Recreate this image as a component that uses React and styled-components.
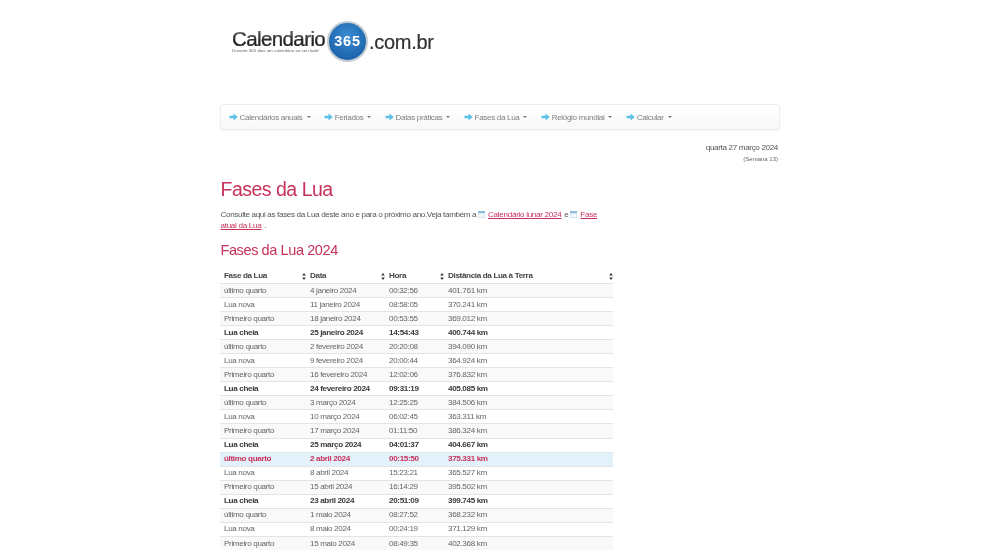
import React from "react";
import styled, { createGlobalStyle } from "styled-components";

const NAV_ITEMS = [
  "Calendários anuais",
  "Feriados",
  "Datas práticas",
  "Fases da Lua",
  "Relógio mundial",
  "Calcular",
];

const ROWS = [
  ["último quarto", "4 janeiro 2024", "00:32:56", "401.761 km"],
  ["Lua nova", "11 janeiro 2024", "08:58:05", "370.241 km"],
  ["Primeiro quarto", "18 janeiro 2024", "00:53:55", "369.012 km"],
  ["Lua cheia", "25 janeiro 2024", "14:54:43", "400.744 km"],
  ["último quarto", "2 fevereiro 2024", "20:20:08", "394.090 km"],
  ["Lua nova", "9 fevereiro 2024", "20:00:44", "364.924 km"],
  ["Primeiro quarto", "16 fevereiro 2024", "12:02:06", "376.832 km"],
  ["Lua cheia", "24 fevereiro 2024", "09:31:19", "405.085 km"],
  ["último quarto", "3 março 2024", "12:25:25", "384.506 km"],
  ["Lua nova", "10 março 2024", "06:02:45", "363.311 km"],
  ["Primeiro quarto", "17 março 2024", "01:11:50", "386.324 km"],
  ["Lua cheia", "25 março 2024", "04:01:37", "404.667 km"],
  ["último quarto", "2 abril 2024", "00:15:50", "375.331 km"],
  ["Lua nova", "8 abril 2024", "15:23:21", "365.527 km"],
  ["Primeiro quarto", "15 abril 2024", "16:14:29", "395.502 km"],
  ["Lua cheia", "23 abril 2024", "20:51:09", "399.745 km"],
  ["último quarto", "1 maio 2024", "08:27:52", "368.232 km"],
  ["Lua nova", "8 maio 2024", "00:24:19", "371.129 km"],
  ["Primeiro quarto", "15 maio 2024", "08:49:35", "402.368 km"],
];

const HEADERS = ["Fase da Lua", "Data", "Hora", "Distância da Lua à Terra"];

const Arrow = () => (
  <svg width="9" height="8" viewBox="0 0 9 8">
    <path d="M0.5 2.8h4V0.4L8.8 4 4.5 7.6V5.2H0.5z" fill="#5cc0e8" />
  </svg>
);

const CalendarIcon = () => (
  <CalendarSvg width="7" height="7" viewBox="0 0 7 7">
    <rect x="0" y="0" width="7" height="7" rx="0.5" fill="#d5e6f2" />
    <rect x="0" y="0" width="7" height="2" fill="#8dbcdd" />
    <rect x="1" y="3" width="5" height="3" fill="#f4f8fb" />
  </CalendarSvg>
);

const SortIcon = () => (
  <SortSvg width="4" height="7" viewBox="0 0 4 7">
    <path d="M2 0l1.8 2.6H0.2zM2 7L0.2 4.4h3.6z" fill="#333" />
  </SortSvg>
);

export default function App() {
  return (
    <Page>
      <GlobalStyle />
      <Logo>
        <LogoName>
          <LogoWord>Calendario</LogoWord>
          <LogoSlogan>Durante 365 dias um calendário ao seu lado!</LogoSlogan>
        </LogoName>
        <LogoBadge>365</LogoBadge>
        <LogoDomain>.com.br</LogoDomain>
      </Logo>

      <Nav>
        {NAV_ITEMS.map((item) => (
          <NavItem key={item}>
            <Arrow />
            {item}
            <Caret />
          </NavItem>
        ))}
      </Nav>

      <DateBox>
        <Today>quarta 27 março 2024</Today>
        <Week>(Semana 13)</Week>
      </DateBox>

      <Title>Fases da Lua</Title>
      <Intro>
        Consulte aqui as fases da Lua deste ano e para o próximo ano.Veja também a{" "}
        <CalendarIcon /> <TextLink>Calendário lunar 2024</TextLink> e <CalendarIcon />{" "}
        <TextLink>Fase atual da Lua</TextLink> .
      </Intro>
      <Subtitle>Fases da Lua 2024</Subtitle>

      <MoonTable>
        <colgroup>
          <col style={{ width: 86 }} />
          <col style={{ width: 79 }} />
          <col style={{ width: 59 }} />
          <col />
        </colgroup>
        <thead>
          <tr>
            {HEADERS.map((h) => (
              <HeadCell key={h}>
                {h}
                <SortIcon />
              </HeadCell>
            ))}
          </tr>
        </thead>
        <tbody>
          {ROWS.map((row, i) => (
            <Row
              key={row[1]}
              $odd={i % 2 === 0}
              $full={row[0] === "Lua cheia"}
              $current={row[1] === "2 abril 2024"}
            >
              {row.map((cell) => (
                <Cell key={cell}>{cell}</Cell>
              ))}
            </Row>
          ))}
        </tbody>
      </MoonTable>
    </Page>
  );
}

const GlobalStyle = createGlobalStyle`
  html, body {
    margin: 0;
    height: 554px;
    overflow: hidden;
    background: #fff;
  }
  body {
    font-family: "Liberation Sans", Arial, sans-serif;
    font-size: 8.1px;
    letter-spacing: -0.35px;
    color: #555;
  }
`;

const Page = styled.div`
  width: 560px;
  margin-left: 220px;
  padding-top: 20px;
  filter: blur(0.35px);
`;

const Logo = styled.div`
  display: flex;
  align-items: center;
  height: 42px;
  padding-left: 12px;
  margin-bottom: 42px;
`;

const LogoName = styled.div`
  display: flex;
  flex-direction: column;
  flex: none;
  width: 95px;
`;

const LogoWord = styled.span`
  font-size: 20.5px;
  line-height: 18px;
  letter-spacing: -0.6px;
  background: linear-gradient(#666, #222 60%);
  -webkit-background-clip: text;
  background-clip: text;
  color: transparent;
  -webkit-text-stroke: 0.2px #333;
`;

const LogoSlogan = styled.span`
  font-size: 4.4px;
  line-height: 5px;
  letter-spacing: 0;
  color: #666;
  white-space: nowrap;
`;

const LogoBadge = styled.div`
  flex: none;
  display: flex;
  align-items: center;
  justify-content: center;
  box-sizing: border-box;
  width: 41px;
  height: 41px;
  border: 2px solid #c4ccd2;
  border-radius: 50%;
  background: radial-gradient(circle at 50% 35%, #3b8bd0, #1258a0);
  color: #fff;
  font-size: 14.5px;
  font-weight: bold;
  letter-spacing: 0.8px;
`;

const LogoDomain = styled.span`
  margin: 2px 0 0 1px;
  font-size: 20px;
  letter-spacing: -0.3px;
  color: #333;
  -webkit-text-stroke: 0.2px #333;
`;

const Nav = styled.nav`
  display: flex;
  align-items: center;
  box-sizing: border-box;
  height: 26px;
  padding-left: 8px;
  gap: 13.7px;
  border: 1px solid #eee;
  border-radius: 2px;
  background: linear-gradient(#fff, #f8f8f8);
  box-shadow: 0 1px 2px rgba(0, 0, 0, 0.05);
`;

const NavItem = styled.a`
  display: flex;
  align-items: center;
  gap: 1.5px;
  color: #808080;
`;

const Caret = styled.span`
  width: 0;
  height: 0;
  margin-left: 2.5px;
  border-top: 2px solid #777;
  border-left: 2px solid transparent;
  border-right: 2px solid transparent;
`;

const DateBox = styled.div`
  margin: 12px 2px 0 0;
  text-align: right;
`;

const Today = styled.div`
  line-height: 11px;
`;

const Week = styled.div`
  margin-top: 2px;
  font-size: 6px;
  line-height: 8px;
  letter-spacing: 0;
  color: #666;
`;

const Title = styled.h1`
  margin: 15px 0 0;
  padding-left: 0.5px;
  font-size: 19.5px;
  font-weight: normal;
  line-height: 22px;
  letter-spacing: -0.5px;
  color: #c7315a;
`;

const Intro = styled.p`
  width: 385px;
  margin: 9px 0 0;
  padding-left: 0.5px;
  line-height: 11px;
`;

const TextLink = styled.a`
  margin: 0 1px;
  letter-spacing: -0.3px;
  color: #c7315a;
  text-decoration: underline;
`;

const CalendarSvg = styled.svg`
  vertical-align: -0.5px;
`;

const Subtitle = styled.h2`
  margin: 11px 0 0;
  padding-left: 0.5px;
  font-size: 14.5px;
  font-weight: normal;
  line-height: 17px;
  letter-spacing: -0.4px;
  color: #c7315a;
`;

const MoonTable = styled.table`
  width: 393px;
  margin-top: 9px;
  border-collapse: collapse;
  table-layout: fixed;
`;

const HeadCell = styled.th`
  position: relative;
  height: 15px;
  padding: 0 4px;
  border-bottom: 1px solid #e4e4e4;
  color: #444;
  text-align: left;
`;

const SortSvg = styled.svg`
  position: absolute;
  right: 0;
  top: 5px;
`;

const Row = styled.tr`
  height: 14.05px;
  background: ${(p) => (p.$current ? "#e3f1fa" : p.$odd ? "#f9f9f9" : "#fff")};
  color: ${(p) => (p.$current ? "#c7315a" : p.$full ? "#3a3a3a" : "#666")};
  font-weight: ${(p) => (p.$full || p.$current ? "bold" : "normal")};
`;

const Cell = styled.td`
  padding: 0 4px;
  border-top: 1px solid #e4e4e4;
  line-height: 10px;
  white-space: nowrap;
`;
